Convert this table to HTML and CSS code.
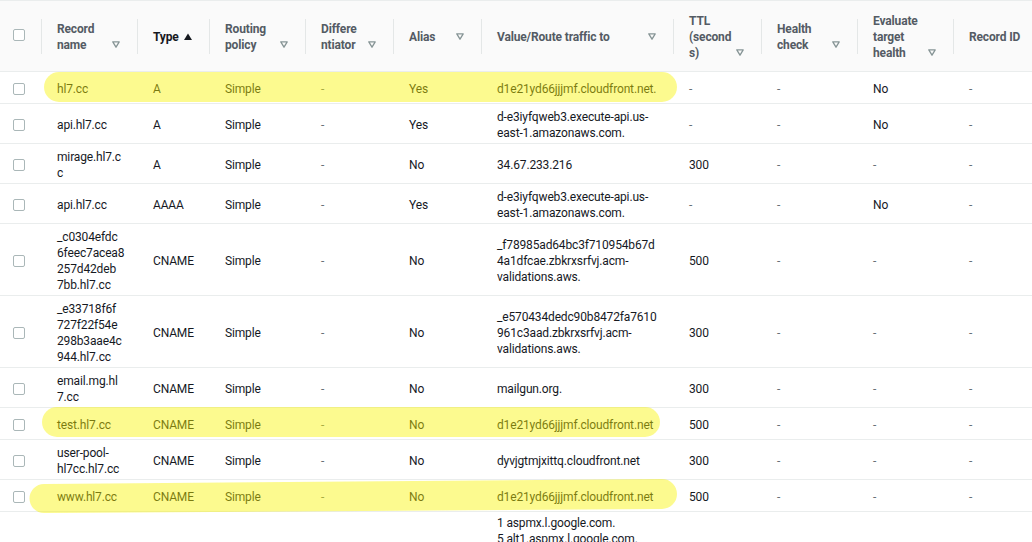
FILE: index.html
```html
<!DOCTYPE html>
<html>
<head>
<meta charset="utf-8">
<link rel="stylesheet" href="styles.css">
</head>
<body>
<div class="wrap">
<table class="records">
<colgroup>
<col class="c-sel"><col class="c-name"><col class="c-type"><col class="c-policy"><col class="c-diff"><col class="c-alias"><col class="c-value"><col class="c-ttl"><col class="c-health"><col class="c-eval"><col class="c-id">
</colgroup>
<thead>
<tr>
<th class="sel"><span class="cbx"></span></th>
<th><div class="hc"><span class="ht">Record<br>name</span><svg class="sort" viewBox="0 0 8 7"><polygon points="0.8,0.8 7.2,0.8 4,6.2"/></svg></div></th>
<th class="sorted"><div class="hc"><span class="ht">Type</span><svg class="sort up" viewBox="0 0 8 7"><polygon points="0,7 8,7 4,0.5"/></svg></div></th>
<th><div class="hc"><span class="ht">Routing<br>policy</span><svg class="sort" viewBox="0 0 8 7"><polygon points="0.8,0.8 7.2,0.8 4,6.2"/></svg></div></th>
<th><div class="hc"><span class="ht">Differe<br>ntiator</span><svg class="sort" viewBox="0 0 8 7"><polygon points="0.8,0.8 7.2,0.8 4,6.2"/></svg></div></th>
<th><div class="hc"><span class="ht">Alias</span><svg class="sort" viewBox="0 0 8 7"><polygon points="0.8,0.8 7.2,0.8 4,6.2"/></svg></div></th>
<th><div class="hc"><span class="ht">Value/Route traffic to</span><svg class="sort" viewBox="0 0 8 7"><polygon points="0.8,0.8 7.2,0.8 4,6.2"/></svg></div></th>
<th><div class="hc"><span class="ht">TTL<br>(second<br>s)</span><svg class="sort" viewBox="0 0 8 7"><polygon points="0.8,0.8 7.2,0.8 4,6.2"/></svg></div></th>
<th><div class="hc"><span class="ht">Health<br>check</span><svg class="sort" viewBox="0 0 8 7"><polygon points="0.8,0.8 7.2,0.8 4,6.2"/></svg></div></th>
<th><div class="hc"><span class="ht">Evaluate<br>target<br>health</span><svg class="sort" viewBox="0 0 8 7"><polygon points="0.8,0.8 7.2,0.8 4,6.2"/></svg></div></th>
<th><div class="hc"><span class="ht">Record ID</span></div></th>
</tr>
</thead>
<tbody>
<tr>
<td class="sel"><div class="cw"><span class="cbx"></span></div></td>
<td>hl7.cc</td><td>A</td><td>Simple</td><td class="na">-</td><td>Yes</td><td>d1e21yd66jjjmf.cloudfront.net.</td><td class="na">-</td><td class="na">-</td><td>No</td><td class="na">-</td>
</tr>
<tr>
<td class="sel"><div class="cw"><span class="cbx"></span></div></td>
<td>api.hl7.cc</td><td>A</td><td>Simple</td><td class="na">-</td><td>Yes</td><td>d-e3iyfqweb3.execute-api.us-<br>east-1.amazonaws.com.</td><td class="na">-</td><td class="na">-</td><td>No</td><td class="na">-</td>
</tr>
<tr>
<td class="sel"><div class="cw"><span class="cbx"></span></div></td>
<td>mirage.hl7.c<br>c</td><td>A</td><td>Simple</td><td class="na">-</td><td>No</td><td>34.67.233.216</td><td>300</td><td class="na">-</td><td class="na">-</td><td class="na">-</td>
</tr>
<tr>
<td class="sel"><div class="cw"><span class="cbx"></span></div></td>
<td>api.hl7.cc</td><td>AAAA</td><td>Simple</td><td class="na">-</td><td>Yes</td><td>d-e3iyfqweb3.execute-api.us-<br>east-1.amazonaws.com.</td><td class="na">-</td><td class="na">-</td><td>No</td><td class="na">-</td>
</tr>
<tr>
<td class="sel"><div class="cw"><span class="cbx"></span></div></td>
<td>_c0304efdc<br>6feec7acea8<br>257d42deb<br>7bb.hl7.cc</td><td>CNAME</td><td>Simple</td><td class="na">-</td><td>No</td><td>_f78985ad64bc3f710954b67d<br>4a1dfcae.zbkrxsrfvj.acm-<br>validations.aws.</td><td>500</td><td class="na">-</td><td class="na">-</td><td class="na">-</td>
</tr>
<tr>
<td class="sel"><div class="cw"><span class="cbx"></span></div></td>
<td>_e33718f6f<br>727f22f54e<br>298b3aae4c<br>944.hl7.cc</td><td>CNAME</td><td>Simple</td><td class="na">-</td><td>No</td><td>_e570434dedc90b8472fa7610<br>961c3aad.zbkrxsrfvj.acm-<br>validations.aws.</td><td>300</td><td class="na">-</td><td class="na">-</td><td class="na">-</td>
</tr>
<tr>
<td class="sel"><div class="cw"><span class="cbx"></span></div></td>
<td>email.mg.hl<br>7.cc</td><td>CNAME</td><td>Simple</td><td class="na">-</td><td>No</td><td>mailgun.org.</td><td>300</td><td class="na">-</td><td class="na">-</td><td class="na">-</td>
</tr>
<tr>
<td class="sel"><div class="cw"><span class="cbx"></span></div></td>
<td>test.hl7.cc</td><td>CNAME</td><td>Simple</td><td class="na">-</td><td>No</td><td>d1e21yd66jjjmf.cloudfront.net</td><td>500</td><td class="na">-</td><td class="na">-</td><td class="na">-</td>
</tr>
<tr>
<td class="sel"><div class="cw"><span class="cbx"></span></div></td>
<td>user-pool-<br>hl7cc.hl7.cc</td><td>CNAME</td><td>Simple</td><td class="na">-</td><td>No</td><td>dyvjgtmjxittq.cloudfront.net</td><td>300</td><td class="na">-</td><td class="na">-</td><td class="na">-</td>
</tr>
<tr>
<td class="sel"><div class="cw"><span class="cbx"></span></div></td>
<td>www.hl7.cc</td><td>CNAME</td><td>Simple</td><td class="na">-</td><td>No</td><td>d1e21yd66jjjmf.cloudfront.net</td><td>500</td><td class="na">-</td><td class="na">-</td><td class="na">-</td>
</tr>
<tr class="last">
<td class="sel"></td>
<td></td><td></td><td></td><td></td><td></td><td>1 aspmx.l.google.com.<br>5 alt1.aspmx.l.google.com.</td><td></td><td></td><td></td><td></td>
</tr>
</tbody>
</table>
<svg class="marker" viewBox="0 0 1032 542" width="1032" height="542">
<path d="M59,72 L662,72 A15,15 0 0 1 662,102 L59,102 A15,15 0 0 1 59,72 Z"/>
<path d="M57,407 L645,407 A15,15 0 0 1 645,437 L57,437 A15,15 0 0 1 57,407 Z"/>
<path d="M44,484 L662,479 A15,15 0 0 1 662,509 L44,513 A14.5,14.5 0 0 1 44,484 Z"/>
</svg>
</div>
</body>
</html>
```
FILE: styles.css
```css
html, body {
  margin: 0;
  padding: 0;
  background: #ffffff;
  overflow: hidden;
}

body {
  font-family: Roboto, "Liberation Sans", sans-serif;
  font-size: 12px;
  line-height: 16px;
  letter-spacing: -0.15px;
  color: #16191f;
}

.wrap {
  position: relative;
  width: 1032px;
  height: 542px;
  overflow: hidden;
}

.records {
  table-layout: fixed;
  width: 1049px;
  border-collapse: separate;
  border-spacing: 0;
}

.c-sel { width: 41px; }
.c-name { width: 96px; }
.c-type { width: 72px; }
.c-policy { width: 96px; }
.c-diff { width: 88px; }
.c-alias { width: 88px; }
.c-value { width: 192px; }
.c-ttl { width: 88px; }
.c-health { width: 96px; }
.c-eval { width: 96px; }
.c-id { width: 96px; }

.records th {
  position: relative;
  background: #fafafa;
  border-top: 1px solid #eaeded;
  border-bottom: 1px solid #eaeded;
  padding: 12px 17px 10px 16px;
  text-align: left;
  vertical-align: middle;
  font-weight: 700;
  color: #545b64;
  white-space: nowrap;
}

.records th::before {
  content: "";
  position: absolute;
  left: 0;
  top: 18px;
  width: 1px;
  height: 35px;
  background: #e4e7e7;
}

.records th.sel::before { display: none; }

.records th.sel,
.records td.sel {
  padding-left: 13px;
  padding-right: 0;
}

.records th.sel {
  padding-top: 9px;
  padding-bottom: 13px;
}

.records th.sorted { color: #16191f; }

.hc {
  display: flex;
  justify-content: space-between;
  align-items: flex-end;
}

.sort {
  width: 8px;
  height: 7px;
  flex: none;
  margin-bottom: 5px;
}

.sort polygon {
  fill: none;
  stroke: #879596;
  stroke-width: 1.3;
  stroke-linejoin: round;
}

.sort.up polygon {
  fill: #16191f;
  stroke: none;
}

.records td {
  padding: 5px 16px 2px;
  border-bottom: 1px solid #eaeded;
  vertical-align: middle;
  white-space: nowrap;
}

.records tr.last td {
  padding-top: 3px;
  vertical-align: top;
  border-bottom: none;
}

.records td.na { color: #687078; }

.cw {
  height: 24px;
  display: flex;
  align-items: center;
}

.cbx {
  display: inline-block;
  width: 10px;
  height: 10px;
  border: 1px solid #aab7b8;
  border-radius: 2px;
  background: #ffffff;
  vertical-align: middle;
}

.marker {
  position: absolute;
  left: 0;
  top: 0;
  pointer-events: none;
}

.marker path {
  fill: rgba(248, 244, 0, 0.44);
}
```
